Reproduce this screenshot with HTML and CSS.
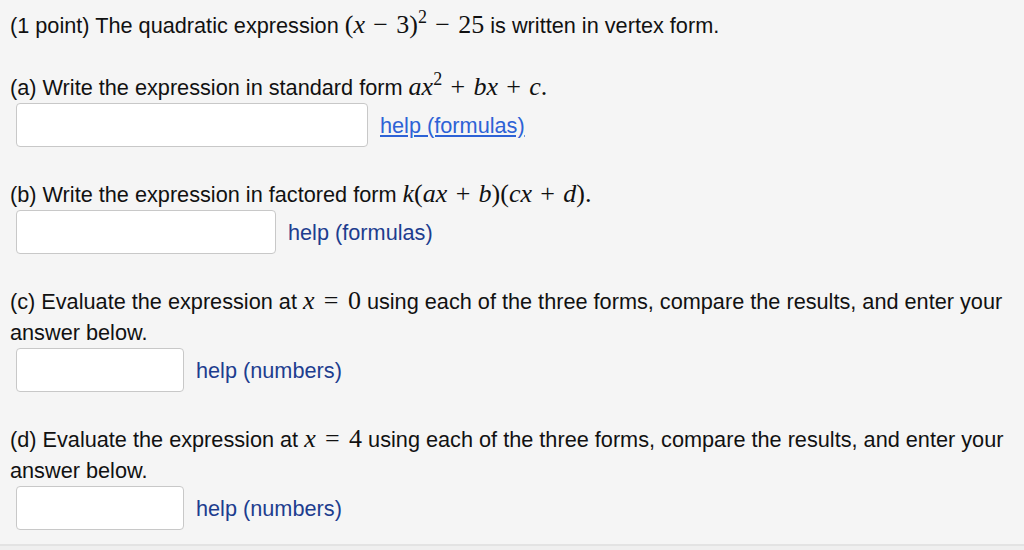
FILE: index.html
```html
<!DOCTYPE html>
<html lang="en">
<head>
    <meta charset="UTF-8">
    <meta name="viewport" content="width=device-width, initial-scale=1.0">
    <title>Quadratic Expression</title>
    <link rel="stylesheet" href="styles.css">
</head>
<body>
    <div class="problem">
        <p class="intro">(1 point) The quadratic expression <span class="math">(<i>x</i><span class="op">&minus;</span>3)<sup>2</sup><span class="op">&minus;</span>25</span> is written in vertex form.</p>

        <div class="part">
            <p>(a) Write the expression in standard form <span class="math"><i>ax</i><sup>2</sup><span class="op">+</span><i>bx</i><span class="op">+</span><i>c</i>.</span></p>
            <div class="answer-row">
                <input type="text" class="answer wide">
                <a href="#" class="help active">help (formulas)</a>
            </div>
        </div>

        <div class="part">
            <p>(b) Write the expression in factored form <span class="math"><i>k</i>(<i>ax</i><span class="op">+</span><i>b</i>)(<i>cx</i><span class="op">+</span><i>d</i>).</span></p>
            <div class="answer-row">
                <input type="text" class="answer medium">
                <a href="#" class="help">help (formulas)</a>
            </div>
        </div>

        <div class="part">
            <p>(c) Evaluate the expression at <span class="math"><i>x</i><span class="rel">=</span>0</span> using each of the three forms, compare the results, and enter your answer below.</p>
            <div class="answer-row">
                <input type="text" class="answer small">
                <a href="#" class="help">help (numbers)</a>
            </div>
        </div>

        <div class="part">
            <p>(d) Evaluate the expression at <span class="math"><i>x</i><span class="rel">=</span>4</span> using each of the three forms, compare the results, and enter your answer below.</p>
            <div class="answer-row">
                <input type="text" class="answer small">
                <a href="#" class="help">help (numbers)</a>
            </div>
        </div>
    </div>
</body>
</html>
```

FILE: styles.css
```css
html {
    background-color: #efefef;
}
body {
    font-family: "Liberation Sans", Arial, sans-serif;
    font-size: 21.7px;
    line-height: 31px;
    color: #111;
    margin: 0;
    padding: 0;
}
.problem {
    background-color: #f5f5f5;
    padding: 9px 10px 14px 10px;
    border-bottom: 2px solid #e3e3e3;
}
p {
    margin: 0;
    padding-top: 1px;
}
.intro {
    margin-bottom: 30px;
}
.part {
    margin-bottom: 31px;
}
.part:last-child {
    margin-bottom: 0;
}
.math {
    font-family: "Liberation Serif", "Times New Roman", serif;
    font-size: 26px;
    line-height: 20px;
}
.math .op {
    margin: 0 0.32em;
}
.math .rel {
    margin: 0 0.36em;
}
.math sup {
    font-size: 18px;
    line-height: 0;
    vertical-align: 10px;
}
.answer-row {
    display: flex;
    align-items: flex-end;
    gap: 12px;
    height: 44px;
    padding-left: 6px;
}
.answer {
    box-sizing: border-box;
    height: 44px;
    margin: 0;
    border: 1px solid #c8c8c8;
    border-radius: 4px;
    background-color: #fff;
    font-size: 20px;
}
.wide {
    width: 352px;
}
.medium {
    width: 260px;
}
.small {
    width: 168px;
}
.help {
    align-self: center;
    color: #1d3d8f;
    text-decoration: none;
}
.help.active {
    color: #2d62d6;
    text-decoration: underline;
}
```
